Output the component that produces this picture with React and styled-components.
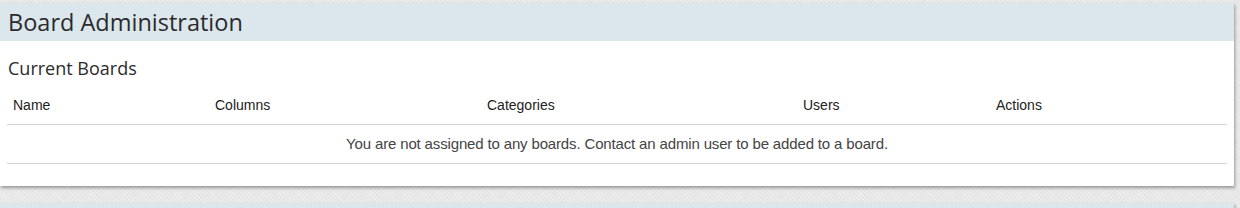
import React from "react";
import styled, { createGlobalStyle } from "styled-components";

const GlobalStyle = createGlobalStyle`
  body {
    margin: 0;
    background-color: #e8e8e8;
    background-image:
      repeating-linear-gradient(45deg, rgba(255,255,255,0.25) 0 1px, transparent 1px 3px),
      repeating-linear-gradient(-45deg, rgba(0,0,0,0.02) 0 1px, transparent 1px 3px);
    font-family: "Liberation Sans", Arial, sans-serif;
    color: #333;
  }
`;

const Page = styled.div`
  padding-top: 3px;
  width: 1234px;
`;

const Card = styled.section`
  background: #fff;
  box-shadow: 1px 2px 3px rgba(0, 0, 0, 0.35);
  margin-bottom: 17px;
`;

const CardHeader = styled.h2`
  margin: 0;
  height: 38px;
  line-height: 38px;
  padding: 0 8px;
  background: #dbe7ed;
  font-family: "Open Sans", "Noto Sans", sans-serif;
  font-weight: 400;
  font-size: 23.5px;
  color: #2b2b2b;
`;

const CardBody = styled.div`
  padding: 16px 7px 22px 7px;
`;

const SubTitle = styled.h3`
  margin: 0 0 16px 1px;
  font-family: "Open Sans", "Noto Sans", sans-serif;
  font-weight: 400;
  font-size: 18px;
  line-height: 22px;
  color: #2b2b2b;
`;

const cols = "202px 272px 316px 193px 1fr";

const HeadRow = styled.div`
  display: grid;
  grid-template-columns: ${cols};
  border-bottom: 1px solid #d3d3d3;
`;

const HeadCell = styled.div`
  padding: 0 0 9px 6px;
  font-size: 14px;
  line-height: 20px;
  color: #222;
`;

const EmptyRow = styled.div`
  padding: 9px 0;
  text-align: center;
  font-size: 15px;
  line-height: 20px;
  color: #444;
  border-bottom: 1px solid #d3d3d3;
  letter-spacing: -0.15px;
`;

const headers = ["Name", "Columns", "Categories", "Users", "Actions"];

export default function App() {
  return (
    <>
      <GlobalStyle />
      <Page>
        <Card>
          <CardHeader>Board Administration</CardHeader>
          <CardBody>
            <SubTitle>Current Boards</SubTitle>
            <HeadRow>
              {headers.map((h) => (
                <HeadCell key={h}>{h}</HeadCell>
              ))}
            </HeadRow>
            <EmptyRow>
              You are not assigned to any boards. Contact an admin user to be
              added to a board.
            </EmptyRow>
          </CardBody>
        </Card>
        <Card>
          <CardHeader />
        </Card>
      </Page>
    </>
  );
}
